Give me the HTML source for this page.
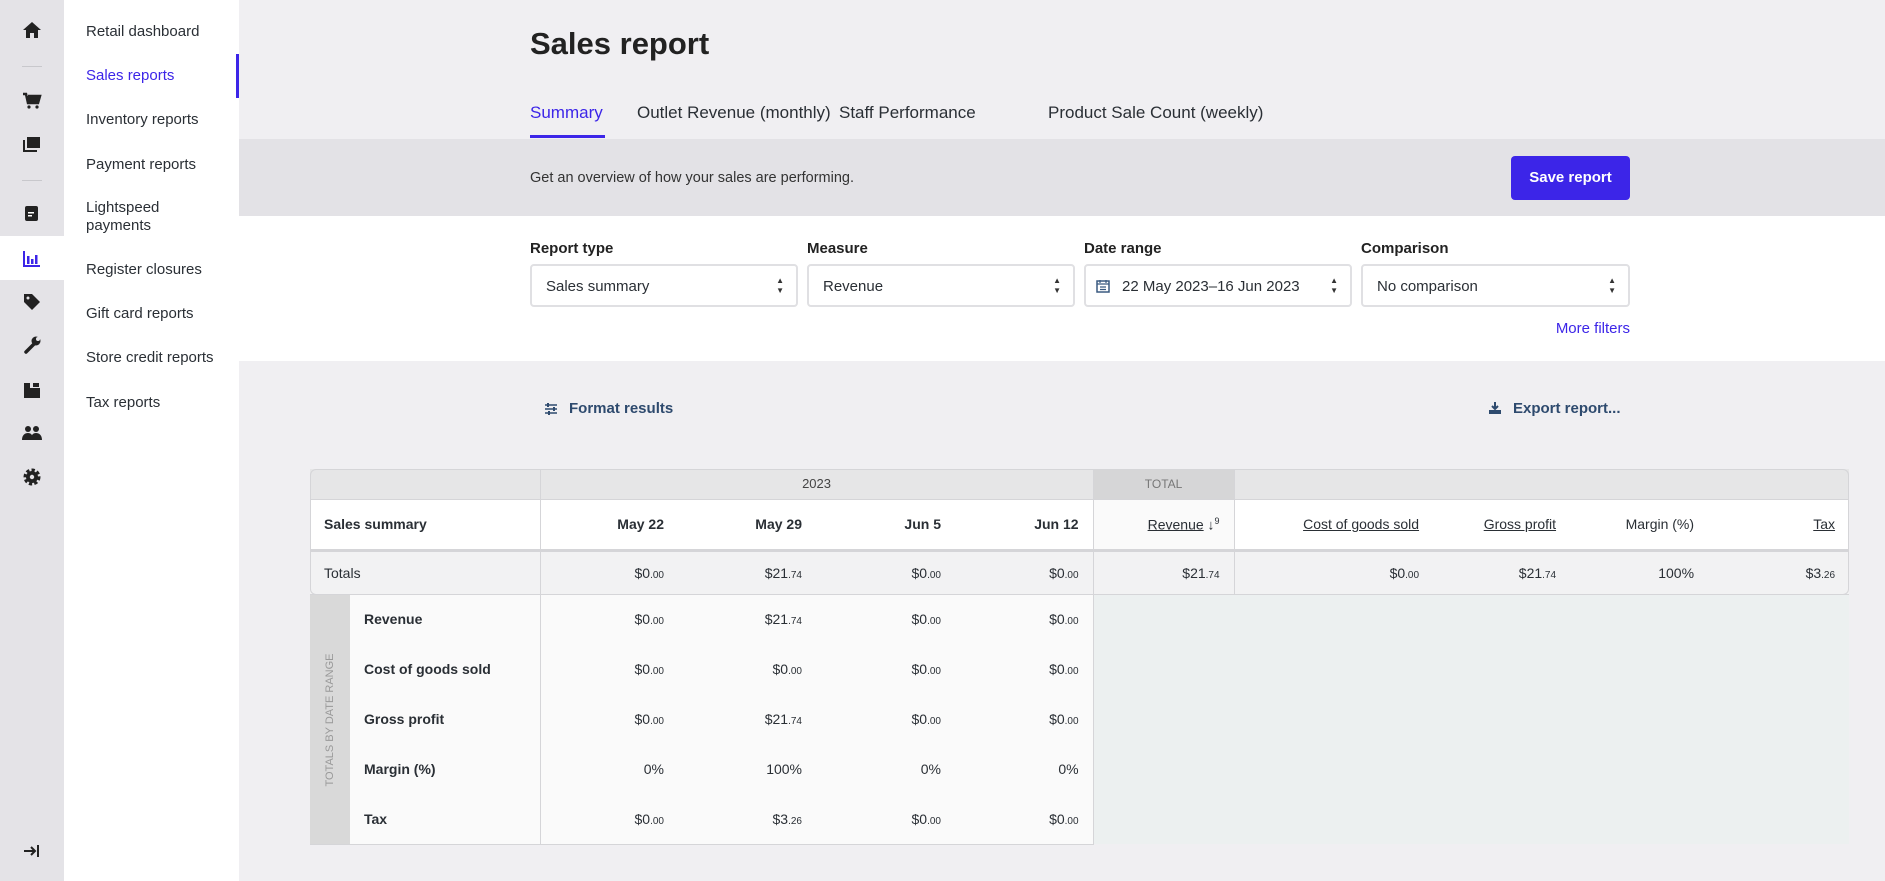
<!DOCTYPE html>
<html><head><meta charset="utf-8"><style>
*{box-sizing:border-box;margin:0;padding:0}
body{width:1885px;height:881px;overflow:hidden;background:#f0eff2;font-family:"Liberation Sans",sans-serif;color:#2a2f35;position:relative}
.a{position:absolute}
.rail{left:0;top:0;width:64px;height:881px;background:#e4e3e7}
.rail .ic{position:absolute;left:22px;width:20px;height:20px}
.sep{position:absolute;left:22px;width:20px;height:1px;background:#c8c8cc}
.sub{left:64px;top:0;width:175px;height:881px;background:#fff}
.sub div{position:absolute;left:22px;font-size:15px;color:#2a2f35;line-height:18px}
h1{position:absolute;left:530px;top:26px;font-size:31px;font-weight:bold;color:#222}
.tab{position:absolute;top:103px;font-size:17px;color:#2a2f35;white-space:nowrap}
.band{left:239px;top:139px;width:1646px;height:77px;background:#e3e2e6}
.white{left:239px;top:216px;width:1646px;height:145px;background:#fff}
.lbl{position:absolute;top:240px;font-size:15px;font-weight:bold;color:#222}
.sel{position:absolute;top:264px;height:43px;border:2px solid #e0e0e3;border-radius:4px;background:#fff;font-size:15px;padding:12px 14px;color:#2a2f35}
.sel .ar{position:absolute;right:12px;top:10px;font-size:8px;line-height:10px;color:#333}
table{position:absolute;left:310px;top:469px;width:1539px;border-collapse:collapse;font-size:14px;table-layout:fixed}
td{padding:0 14px;text-align:right;white-space:nowrap;overflow:hidden}
.n small{font-size:10px}
.hd td{height:30px;background:#e6e6e7;font-size:13px;color:#444;text-align:center;border-bottom:1px solid #d5d5d8}
.cols td{height:51px;background:#fff;border-bottom:3px solid #d5d5d8}
.tot td{height:44px;background:#f2f2f3;border-bottom:1px solid #d5d5d8}
.bd td{height:50px;background:#fafafa}
u{text-decoration:underline}
.vl{border-right:1px solid #d5d5d8}
</style></head><body>
<div class="a rail">
<svg class="ic" style="top:20px" viewBox="0 0 20 20"><path d="M10 2 1 10h3v8h4v-5h4v5h4v-8h3z" fill="#222"/></svg>
<div class="sep" style="top:66px"></div>
<svg class="ic" style="top:91px" viewBox="0 0 20 20"><path d="M1 3h3l2 9h10l2-7H6" fill="none" stroke="#222" stroke-width="2.5"/><path d="M5 5h13l-2 7H6z" fill="#222"/><circle cx="7" cy="16" r="1.6" fill="#222"/><circle cx="15" cy="16" r="1.6" fill="#222"/></svg>
<svg class="ic" style="top:134px" viewBox="0 0 20 20"><rect x="5" y="3" width="13" height="11" fill="#222"/><path d="M2 6v11h13" fill="none" stroke="#222" stroke-width="2"/></svg>
<div class="sep" style="top:180px"></div>
<svg class="ic" style="top:203px" viewBox="0 0 20 20"><rect x="3" y="3" width="13" height="15" rx="2" fill="#222"/><rect x="6" y="9" width="6" height="1.5" fill="#fff"/><rect x="6" y="12" width="4" height="1.5" fill="#fff"/></svg>
<div class="a" style="left:0;top:236px;width:64px;height:44px;background:#fff"></div>
<svg class="ic" style="top:248px" viewBox="0 0 20 20"><path d="M2 3v15h16" fill="none" stroke="#3c25e8" stroke-width="2"/><rect x="5" y="8" width="2.5" height="8" fill="#3c25e8"/><rect x="9" y="11" width="2.5" height="5" fill="#3c25e8"/><rect x="13" y="7" width="2.5" height="9" fill="#3c25e8"/></svg>
<svg class="ic" style="top:292px" viewBox="0 0 20 20"><path d="M2 2h8l8 8-8 8-8-8z" fill="#222"/><circle cx="6" cy="6" r="1.5" fill="#e4e3e7"/></svg>
<svg class="ic" style="top:335px" viewBox="0 0 20 20"><path d="M4 17 12 9" stroke="#222" stroke-width="3.5" stroke-linecap="round"/><circle cx="14" cy="6" r="4.5" fill="#222"/><circle cx="16" cy="4" r="2" fill="#e4e3e7"/></svg>
<svg class="ic" style="top:380px" viewBox="0 0 20 20"><rect x="2" y="8" width="16" height="10" fill="#222"/><rect x="2" y="3" width="6" height="6" fill="#222"/><rect x="11" y="3" width="6" height="4" fill="#222"/></svg>
<svg class="ic" style="top:423px" viewBox="0 0 20 20"><circle cx="6" cy="6" r="3" fill="#222"/><circle cx="14" cy="6" r="3" fill="#222"/><path d="M0 17c0-5 3-7 6-7s5 2 5 7zM9 17c0-5 2-7 5-7s6 2 6 7z" fill="#222"/></svg>
<svg class="ic" style="top:467px" viewBox="0 0 20 20"><circle cx="10" cy="10" r="6.5" fill="none" stroke="#222" stroke-width="4" stroke-dasharray="3 2"/><circle cx="10" cy="10" r="6" fill="#222"/><circle cx="10" cy="10" r="2.2" fill="#e4e3e7"/></svg>
<svg class="ic" style="top:841px" viewBox="0 0 20 20"><path d="M2 10h11M9 6l4 4-4 4M16 4v12" fill="none" stroke="#222" stroke-width="2"/></svg>
</div>
<div class="a sub">
<div style="top:23px">Retail dashboard</div>
<div style="top:67px;color:#3c25e8">Sales reports</div>
<div style="top:111px">Inventory reports</div>
<div style="top:156px">Payment reports</div>
<div style="top:199px">Lightspeed<br>payments</div>
<div style="top:261px">Register closures</div>
<div style="top:305px">Gift card reports</div>
<div style="top:349px">Store credit reports</div>
<div style="top:394px">Tax reports</div>
<span class="a" style="left:172px;top:54px;width:3px;height:44px;background:#3c25e8"></span>
</div>
<h1>Sales report</h1>
<div class="tab" style="left:530px;color:#3c25e8">Summary</div>
<div class="a" style="left:530px;top:135px;width:75px;height:3px;background:#3c25e8"></div>
<div class="tab" style="left:637px">Outlet Revenue (monthly)</div>
<div class="tab" style="left:839px">Staff Performance</div>
<div class="tab" style="left:1048px">Product Sale Count (weekly)</div>
<div class="a band"></div>
<div class="a" style="left:530px;top:170px;font-size:14.5px;color:#333">Get an overview of how your sales are performing.</div>
<div class="a" style="left:1511px;top:156px;width:119px;height:44px;background:#3c25e8;border-radius:4px;color:#fff;font-size:15px;font-weight:bold;text-align:center;line-height:44px">Save report</div>
<div class="a white"></div>
<div class="lbl" style="left:530px">Report type</div>
<div class="lbl" style="left:807px">Measure</div>
<div class="lbl" style="left:1084px">Date range</div>
<div class="lbl" style="left:1361px">Comparison</div>
<div class="sel" style="left:530px;width:268px">Sales summary<div class="ar">▲<br>▼</div></div>
<div class="sel" style="left:807px;width:268px">Revenue<div class="ar">▲<br>▼</div></div>
<div class="sel" style="left:1084px;width:268px;padding-left:36px"><svg class="a" style="left:10px;top:13px" width="14" height="14" viewBox="0 0 14 14"><rect x="1" y="2" width="12" height="11" fill="none" stroke="#3a5a80" stroke-width="1.5"/><path d="M1 5h12M4 1v3M10 1v3M4 8h6M4 10.5h6" stroke="#3a5a80" stroke-width="1.2"/></svg>22 May 2023–16 Jun 2023<div class="ar">▲<br>▼</div></div>
<div class="sel" style="left:1361px;width:269px">No comparison<div class="ar">▲<br>▼</div></div>
<div class="a" style="left:1530px;top:320px;width:100px;text-align:right;font-size:15px;color:#3c25e8">More filters</div>
<svg class="a" style="left:544px;top:402px" width="14" height="14" viewBox="0 0 14 14"><path d="M1 3h12M1 7h12M1 11h12" stroke="#2e4a6e" stroke-width="1.5"/><rect x="3" y="1" width="2" height="4" fill="#2e4a6e"/><rect x="9" y="5" width="2" height="4" fill="#2e4a6e"/><rect x="4" y="9" width="2" height="4" fill="#2e4a6e"/></svg>
<div class="a" style="left:569px;top:400px;font-size:15px;font-weight:bold;color:#2e4a6e">Format results</div>
<svg class="a" style="left:1488px;top:401px" width="14" height="14" viewBox="0 0 14 14"><path d="M7 1v7M4 5l3 3 3-3" stroke="#2e4a6e" stroke-width="2" fill="none"/><path d="M1 9v4h12V9" fill="#2e4a6e"/></svg>
<div class="a" style="left:1513px;top:400px;font-size:15px;font-weight:bold;color:#2e4a6e">Export report...</div>
<div class="a" style="left:1093px;top:594px;width:756px;height:250px;background:#ecf0f0"></div>
<table>
<colgroup><col style="width:40px"><col style="width:190px"><col style="width:138px"><col style="width:138px"><col style="width:139px"><col style="width:138px"><col style="width:141px"><col style="width:199px"><col style="width:137px"><col style="width:138px"><col style="width:141px"></colgroup>
<tr class="hd"><td colspan="2" class="vl"></td><td colspan="4" class="vl">2023</td><td class="vl" style="background:#d6d6d7;color:#777;font-size:12px">TOTAL</td><td colspan="4"></td></tr>
<tr class="cols"><td colspan="2" class="vl" style="text-align:left;font-weight:bold">Sales summary</td><td style="font-weight:bold">May 22</td><td style="font-weight:bold">May 29</td><td style="font-weight:bold">Jun 5</td><td class="vl" style="font-weight:bold">Jun 12</td><td class="vl" style="background:#fafafa"><u>Revenue</u> ↓<sup style="font-size:9px">9</sup></td><td><u>Cost of goods sold</u></td><td><u>Gross profit</u></td><td>Margin (%)</td><td><u>Tax</u></td></tr>
<tr class="tot n"><td colspan="2" class="vl" style="text-align:left">Totals</td><td>$0<small>.00</small></td><td>$21<small>.74</small></td><td>$0<small>.00</small></td><td class="vl">$0<small>.00</small></td><td class="vl">$21<small>.74</small></td><td>$0<small>.00</small></td><td>$21<small>.74</small></td><td>100%</td><td>$3<small>.26</small></td></tr>
<tr class="bd n"><td rowspan="5" style="background:#d9d9d9;padding:0;position:relative;border-bottom:1px solid #d5d5d8"><div style="position:absolute;left:20px;top:125px;transform:translate(-50%,-50%) rotate(-90deg);font-size:11px;color:#999;white-space:nowrap">TOTALS BY DATE RANGE</div></td><td class="vl" style="text-align:left;font-weight:bold">Revenue</td><td>$0<small>.00</small></td><td>$21<small>.74</small></td><td>$0<small>.00</small></td><td class="vl">$0<small>.00</small></td><td colspan="5" style="background:transparent"></td></tr>
<tr class="bd n"><td class="vl" style="text-align:left;font-weight:bold">Cost of goods sold</td><td>$0<small>.00</small></td><td>$0<small>.00</small></td><td>$0<small>.00</small></td><td class="vl">$0<small>.00</small></td><td colspan="5" style="background:transparent"></td></tr>
<tr class="bd n"><td class="vl" style="text-align:left;font-weight:bold">Gross profit</td><td>$0<small>.00</small></td><td>$21<small>.74</small></td><td>$0<small>.00</small></td><td class="vl">$0<small>.00</small></td><td colspan="5" style="background:transparent"></td></tr>
<tr class="bd n"><td class="vl" style="text-align:left;font-weight:bold">Margin (%)</td><td>0%</td><td>100%</td><td>0%</td><td class="vl">0%</td><td colspan="5" style="background:transparent"></td></tr>
<tr class="bd n"><td class="vl" style="text-align:left;font-weight:bold;border-bottom:1px solid #d5d5d8">Tax</td><td style="border-bottom:1px solid #d5d5d8">$0<small>.00</small></td><td style="border-bottom:1px solid #d5d5d8">$3<small>.26</small></td><td style="border-bottom:1px solid #d5d5d8">$0<small>.00</small></td><td class="vl" style="border-bottom:1px solid #d5d5d8">$0<small>.00</small></td><td colspan="5" style="background:transparent"></td></tr>
</table>
<div class="a" style="left:310px;top:469px;width:1539px;height:126px;border:1px solid #d5d5d8;border-radius:6px;pointer-events:none"></div>
</body></html>
